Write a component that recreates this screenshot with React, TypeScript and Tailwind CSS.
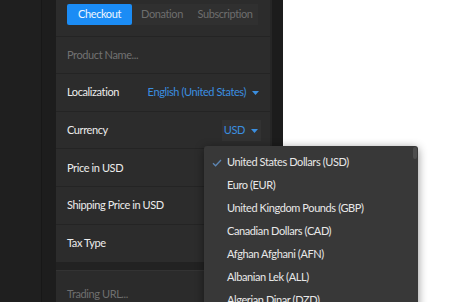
import React from "react";

const font = { fontFamily: 'Lato, "Open Sans", sans-serif' };

function Caret() {
  return (
    <svg width="7" height="4" viewBox="0 0 7 4" className="ml-[6px]">
      <path d="M0 0 H7 L3.5 4 Z" fill="#3b8fe0" />
    </svg>
  );
}

function Row({ children, className = "" }: { children: React.ReactNode; className?: string }) {
  return (
    <div className={`flex items-center justify-between border-t border-[#242424] pl-[11px] pr-[11px] ${className}`}>
      {children}
    </div>
  );
}

export default function App() {
  const items = [
    "United States Dollars (USD)",
    "Euro (EUR)",
    "United Kingdom Pounds (GBP)",
    "Canadian Dollars (CAD)",
    "Afghan Afghani (AFN)",
    "Albanian Lek (ALL)",
    "Algerian Dinar (DZD)",
  ];
  return (
    <div className="relative flex h-[302px] w-[474px] overflow-hidden text-[11px] tracking-[-0.4px]" style={font}>
      <div className="w-[41px] bg-[#1f1f1f]" />
      <div className="w-[1px] bg-[#171717]" />
      <div className="w-[14px] bg-[#1d1d1d]" />
      <div className="flex w-[214px] flex-col bg-[#232323]">
        <div className="flex flex-col bg-[#2c2c2c]">
          <div className="h-[36px] pl-[11px] pr-[12px] pt-[4px]">
            <div className="flex h-[21px] bg-[#303030]">
              <div className="flex w-[65px] items-center justify-center rounded-[2px] bg-[#1b8cf5] text-[#eef6ff]">Checkout</div>
              <div className="flex w-[60px] items-center justify-center text-[#6e6e6e]">Donation</div>
              <div className="flex flex-1 items-center justify-center text-[#6e6e6e]">Subscription</div>
            </div>
          </div>
          <Row className="h-[37px]">
            <span className="text-[#727272]">Product Name...</span>
          </Row>
          <Row className="h-[38px]">
            <span className="text-[#ececec]">Localization</span>
            <span className="flex items-center text-[#3b8fe0]">
              English (United States)
              <Caret />
            </span>
          </Row>
          <Row className="h-[37px] pt-[1px]">
            <span className="text-[#ececec]">Currency</span>
            <span className="-mr-[2px] flex h-[21px] items-center bg-[#323232] pl-[2px] pr-[3px] text-[#3b8fe0]">
              USD
              <Caret />
            </span>
          </Row>
          <Row className="h-[38px] pt-[1px]">
            <span className="text-[#ececec]">Price in USD</span>
          </Row>
          <Row className="h-[38px]">
            <span className="text-[#ececec]">Shipping Price in USD</span>
          </Row>
          <Row className="h-[38px]">
            <span className="text-[#ececec]">Tax Type</span>
          </Row>
        </div>
        <div className="h-[22px] bg-[#222222]" />
        <div className="flex h-[37px] items-start border-t border-[#333333] bg-[#2b2b2b] pl-[11px] pt-[15px]">
          <span className="text-[#6f6f6f]">Trading URL...</span>
        </div>
      </div>
      <div className="w-[2px] bg-[#262626]" />
      <div className="w-[11px] bg-[#1c1c1c]" />
      <div className="flex-1 bg-white" />

      <div className="absolute left-[204px] top-[146px] h-[170px] w-[214px] rounded-[3px] bg-[#383838] pt-[5px] shadow-[0_2px_10px_rgba(0,0,0,0.45)]">
        <div className="absolute right-[1px] top-[1px] h-[12px] w-[4px] rounded-[2px] bg-[#4c4c4c]" />
        {items.map((t, i) => (
          <div key={t} className="flex h-[23px] items-center text-[#e8e8e8]">
            <span className="flex w-[23px] justify-end pr-[5px]">
              {i === 0 && (
                <svg width="10" height="8" viewBox="0 0 10 8">
                  <path d="M1 4.2 L3.6 6.8 L9 1" fill="none" stroke="#5d86b3" strokeWidth="1.3" />
                </svg>
              )}
            </span>
            <span>{t}</span>
          </div>
        ))}
      </div>
    </div>
  );
}
